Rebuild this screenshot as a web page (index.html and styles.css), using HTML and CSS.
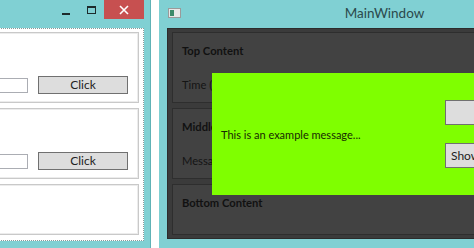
FILE: index.html
```html
<!DOCTYPE html>
<html>
<head>
<meta charset="utf-8">
<link rel="stylesheet" href="styles.css">
</head>
<body>
<div class="win win-left">
  <div class="titlebar titlebar-left">
    <div class="ctl ctl-min"><span class="min-bar"></span></div>
    <div class="ctl ctl-max"><span class="max-box"></span></div>
    <div class="ctl ctl-close">
      <svg width="10" height="10" viewBox="0 0 10 10"><path d="M1 1 L9 9 M9 1 L1 9" stroke="#fff" stroke-width="1.6"/></svg>
    </div>
  </div>
  <div class="content-light">
    <div class="lsec lsec-a">
      <div class="lrow"><div class="tbox"></div><div class="btn">Click</div></div>
    </div>
    <div class="lsec lsec-a">
      <div class="lrow"><div class="tbox"></div><div class="btn">Click</div></div>
    </div>
    <div class="lsec lsec-b"></div>
  </div>
</div>

<div class="win win-right">
  <div class="titlebar titlebar-right">
    <svg class="appicon" width="13" height="10" viewBox="0 0 13 10"><rect x="0.5" y="0.5" width="12" height="9" fill="#e8e8e8" stroke="#9a9a9a"/><rect x="2" y="2" width="4" height="6" fill="#3d8a6a"/></svg>
    <div class="title">MainWindow</div>
  </div>
  <div class="content-dark">
    <div class="dsec dsec-a">
      <div class="dhead">Top Content</div>
      <div class="dlabel">Time (hh:mm:ss)</div>
    </div>
    <div class="dsec dsec-a">
      <div class="dhead">Middle Content</div>
      <div class="dlabel">Message</div>
    </div>
    <div class="dsec dsec-b">
      <div class="dhead">Bottom Content</div>
    </div>
    <div class="overlay">
      <div class="msg">This is an example message...</div>
      <div class="obtns">
        <div class="obtn obtn-blank"></div>
        <div class="obtn">Show</div>
      </div>
    </div>
  </div>
</div>
</body>
</html>
```

FILE: styles.css
```css
html, body {
  margin: 0;
  padding: 0;
}
body {
  width: 474px;
  height: 248px;
  overflow: hidden;
  background: #ffffff;
  display: flex;
  align-items: flex-start;
  font-family: Lato, "Noto Sans", sans-serif;
}
.win {
  box-sizing: border-box;
  height: 260px;
  background: #80d0d3;
  display: flex;
  flex-direction: column;
  flex: none;
}
.win-left {
  width: 300px;
  margin-left: -149px;
  border-right: 1px solid #5fb2b6;
  margin-right: 8px;
}
.titlebar {
  height: 28px;
  flex: none;
  display: flex;
}
.titlebar-left {
  justify-content: flex-end;
  align-items: flex-start;
  padding-right: 6px;
}
.ctl {
  height: 19px;
  display: flex;
  align-items: center;
  justify-content: center;
}
.ctl-min { width: 26px; }
.ctl-max { width: 26px; }
.ctl-close { width: 40px; background: #c75050; }
.min-bar {
  width: 8px;
  height: 2px;
  background: #1d2b2c;
  margin-top: 9px;
  margin-left: 2px;
}
.max-box {
  box-sizing: border-box;
  width: 9px;
  height: 8px;
  border: 1px solid #1d2b2c;
  border-top-width: 2px;
  margin-top: 1px;
}
.content-light {
  margin: 0 6px 0 7px;
  height: 213px;
  box-sizing: border-box;
  background: #ffffff;
  border: 1px dotted #8a9a9a;
  padding: 3px 4px 5px;
  display: flex;
  flex-direction: column;
  gap: 5px;
}
.lsec {
  box-sizing: border-box;
  border: 1px solid #c9c9c9;
  box-shadow: inset 0 0 0 1px #ececec;
  display: flex;
  flex-direction: column;
  justify-content: flex-end;
}
.lsec-a { height: 71px; padding: 0 10px 8px 0; }
.lsec-b { height: 51px; }
.lrow {
  display: flex;
  justify-content: flex-end;
  align-items: center;
  gap: 10px;
}
.tbox {
  box-sizing: border-box;
  width: 80px;
  height: 15px;
  border: 1px solid #abadb3;
  background: #fff;
}
.btn, .obtn {
  box-sizing: border-box;
  width: 90px;
  height: 18px;
  background: #dddddd;
  border: 1px solid #707070;
  font-size: 12px;
  color: #222;
  display: flex;
  align-items: center;
  justify-content: center;
  line-height: 1;
}
.win-right {
  width: 450px;
}
.titlebar-right {
  align-items: center;
  position: relative;
  padding-left: 9px;
}
.appicon { flex: none; margin-top: -2px; }
.title {
  flex: 1;
  text-align: center;
  font-size: 13.5px;
  color: #2b4a4c;
  margin-left: -21px;
  margin-top: -2px;
}
.content-dark {
  position: relative;
  margin: 0 8px;
  height: 211px;
  box-sizing: border-box;
  background: #3b3b3b;
  border: 1px solid #2c2c2c;
  padding: 3px 4px 2px;
  display: flex;
  flex-direction: column;
  gap: 5px;
}
.dsec {
  box-sizing: border-box;
  border: 1px solid #2e2e2e;
  background: #424242;
  padding: 9px 9px 0;
  color: #111;
  font-size: 11.2px;
}
.dsec-a { height: 71px; }
.dsec-b { height: 51px; padding-top: 9px; }
.dhead {
  font-weight: bold;
  height: 17px;
  line-height: 17px;
}
.dlabel {
  margin-top: 17px;
  line-height: 17px;
  color: #141414;
}
.overlay {
  position: absolute;
  left: 44px;
  top: 44px;
  width: 330px;
  height: 122px;
  background: #7fff00;
  display: flex;
  align-items: center;
}
.msg {
  flex: none;
  width: 233px;
  box-sizing: border-box;
  padding-left: 9px;
  font-size: 11px;
  color: #172a03;
}
.obtns {
  flex: none;
  display: flex;
  flex-direction: column;
  gap: 18px;
}
.obtn {
  width: 70px;
  height: 25px;
  justify-content: flex-start;
  padding-left: 5px;
}
```
